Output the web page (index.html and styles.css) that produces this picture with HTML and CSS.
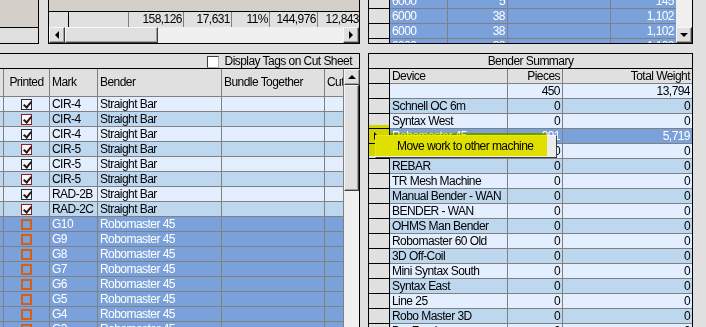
FILE: index.html
```html
<!DOCTYPE html>
<html lang="en">
<head>
  <meta charset="UTF-8" />
  <title>Bender Summary</title>
  <link rel="stylesheet" href="styles.css">
</head>
<body>
  <div class="top">
    <div class="stub">
      <div class="stub-head"></div>
    </div>

    <div class="totals">
      <div class="totals-head"></div>
      <div class="totals-row">
        <span class="rh"></span>
        <span></span>
        <span>158,126</span>
        <span>17,631</span>
        <span>11%</span>
        <span>144,976</span>
        <span>12,843</span>
      </div>
      <div class="hscroll">
        <div class="sbtn"><i class="arr-l"></i></div>
        <div class="thumb-h"></div>
        <div class="track"></div>
        <div class="sbtn"><i class="arr-r"></i></div>
      </div>
    </div>

    <div class="stock">
      <div class="stock-rows">
        <div class="srow"><span class="rh"></span><span>6000</span><span class="num">5</span><span></span><span class="num">145</span></div>
        <div class="srow"><span class="rh"></span><span>6000</span><span class="num">38</span><span></span><span class="num">1,102</span></div>
        <div class="srow"><span class="rh"></span><span>6000</span><span class="num">38</span><span></span><span class="num">1,102</span></div>
        <div class="srow"><span class="rh"></span><span>6000</span><span class="num">38</span><span></span><span class="num">1,102</span></div>
      </div>
      <div class="vscroll">
        <div class="track"></div>
        <div class="sbtn"><i class="arr-d"></i></div>
      </div>
    </div>
  </div>

  <div class="main">
    <!-- cut list -->
    <div class="cuts">
      <div class="bar">
        <i class="box"></i>
        <label>Display Tags on Cut Sheet</label>
      </div>
      <div class="cuts-body">
        <div class="cut-table">
          <div class="crow chead"><span></span><span class="c">Printed</span><span>Mark</span><span>Bender</span><span>Bundle Together</span><span>Cut</span></div>
          <div class="crow"><span></span><span class="c"><i class="chk"></i></span><span>CIR-4</span><span>Straight Bar</span><span></span><span></span></div>
          <div class="crow alt"><span></span><span class="c"><i class="chk red"></i></span><span>CIR-4</span><span>Straight Bar</span><span></span><span></span></div>
          <div class="crow"><span></span><span class="c"><i class="chk"></i></span><span>CIR-4</span><span>Straight Bar</span><span></span><span></span></div>
          <div class="crow alt"><span></span><span class="c"><i class="chk red"></i></span><span>CIR-5</span><span>Straight Bar</span><span></span><span></span></div>
          <div class="crow"><span></span><span class="c"><i class="chk"></i></span><span>CIR-5</span><span>Straight Bar</span><span></span><span></span></div>
          <div class="crow alt"><span></span><span class="c"><i class="chk red"></i></span><span>CIR-5</span><span>Straight Bar</span><span></span><span></span></div>
          <div class="crow"><span></span><span class="c"><i class="chk"></i></span><span>RAD-2B</span><span>Straight Bar</span><span></span><span></span></div>
          <div class="crow alt"><span></span><span class="c"><i class="chk red"></i></span><span>RAD-2C</span><span>Straight Bar</span><span></span><span></span></div>
          <div class="crow sel"><span></span><span class="c"><i class="chk off"></i></span><span>G10</span><span>Robomaster 45</span><span></span><span></span></div>
          <div class="crow sel"><span></span><span class="c"><i class="chk off"></i></span><span>G9</span><span>Robomaster 45</span><span></span><span></span></div>
          <div class="crow sel"><span></span><span class="c"><i class="chk off"></i></span><span>G8</span><span>Robomaster 45</span><span></span><span></span></div>
          <div class="crow sel"><span></span><span class="c"><i class="chk off"></i></span><span>G7</span><span>Robomaster 45</span><span></span><span></span></div>
          <div class="crow sel"><span></span><span class="c"><i class="chk off"></i></span><span>G6</span><span>Robomaster 45</span><span></span><span></span></div>
          <div class="crow sel"><span></span><span class="c"><i class="chk off"></i></span><span>G5</span><span>Robomaster 45</span><span></span><span></span></div>
          <div class="crow sel"><span></span><span class="c"><i class="chk off"></i></span><span>G4</span><span>Robomaster 45</span><span></span><span></span></div>
          <div class="crow sel"><span></span><span class="c"><i class="chk off"></i></span><span>G3</span><span>Robomaster 45</span><span></span><span></span></div>
        </div>
        <div class="vscroll">
          <div class="sbtn"><i class="arr-u"></i></div>
          <div class="thumb-v"></div>
          <div class="track"></div>
        </div>
      </div>
    </div>

    <!-- bender summary -->
    <div class="summary">
      <div class="sum-title">Bender Summary</div>
      <div class="mrow mhead"><span class="rh"></span><span>Device</span><span class="num">Pieces</span><span class="num">Total Weight</span></div>
      <div class="mrow"><span class="rh"></span><span></span><span class="num">450</span><span class="num">13,794</span></div>
      <div class="mrow alt"><span class="rh"></span><span>Schnell OC 6m</span><span class="num">0</span><span class="num">0</span></div>
      <div class="mrow"><span class="rh"></span><span>Syntax West</span><span class="num">0</span><span class="num">0</span></div>
      <div class="mrow sel"><span class="rh cur"><i class="arr-r"></i></span><span>Robomaster 45</span><span class="num">391</span><span class="num">5,719</span></div>
      <div class="mrow"><span class="rh"></span><span>Robomaster 60</span><span class="num">0</span><span class="num">0</span></div>
      <div class="mrow alt"><span class="rh"></span><span>REBAR</span><span class="num">0</span><span class="num">0</span></div>
      <div class="mrow"><span class="rh"></span><span>TR Mesh Machine</span><span class="num">0</span><span class="num">0</span></div>
      <div class="mrow alt"><span class="rh"></span><span>Manual Bender - WAN</span><span class="num">0</span><span class="num">0</span></div>
      <div class="mrow"><span class="rh"></span><span>BENDER - WAN</span><span class="num">0</span><span class="num">0</span></div>
      <div class="mrow alt"><span class="rh"></span><span>OHMS Man Bender</span><span class="num">0</span><span class="num">0</span></div>
      <div class="mrow"><span class="rh"></span><span>Robomaster 60 Old</span><span class="num">0</span><span class="num">0</span></div>
      <div class="mrow alt"><span class="rh"></span><span>3D Off-Coil</span><span class="num">0</span><span class="num">0</span></div>
      <div class="mrow"><span class="rh"></span><span>Mini Syntax South</span><span class="num">0</span><span class="num">0</span></div>
      <div class="mrow alt"><span class="rh"></span><span>Syntax East</span><span class="num">0</span><span class="num">0</span></div>
      <div class="mrow"><span class="rh"></span><span>Line 25</span><span class="num">0</span><span class="num">0</span></div>
      <div class="mrow alt"><span class="rh"></span><span>Robo Master 3D</span><span class="num">0</span><span class="num">0</span></div>
      <div class="mrow"><span class="rh"></span><span>Bar Feeder</span><span class="num">0</span><span class="num">0</span></div>
    </div>
  </div>

  <!-- context menu + marker highlight -->
  <div class="menu">Move work to other machine</div>
  <div class="mark mark-a"></div>
  <div class="mark mark-b"></div>
</body>
</html>
```

FILE: styles.css
```css
* {
  box-sizing: border-box;
}

body {
  margin: 0;
  width: 706px;
  height: 327px;
  overflow: hidden;
  position: relative;
  background: #e0e0e0;
  color: #000;
  font-family: "Liberation Sans", Arial, sans-serif;
  font-size: 12px;
  line-height: 14px;
  letter-spacing: -0.55px;
}

/* top strip */
.top {
  display: flex;
  height: 44px;
}

.stub {
  width: 39px;
  border-right: 1px solid #000;
  border-bottom: 1px solid #000;
}

.stub-head {
  height: 28px;
  background: #d4d0c8;
  border-bottom: 1px solid #000;
}

.totals {
  width: 312px;
  margin-left: 9px;
  border: 1px solid #000;
  border-top: 0;
}

.totals-head {
  height: 12px;
  background: #d4d0c8;
  border-bottom: 1px solid #000;
}

.totals-row {
  display: grid;
  grid-template-columns: 20px 60px 55px 48px 38px 48px 41px;
  height: 15px;
  line-height: 15px;
}

.totals-row span {
  border-right: 1px solid #808080;
  text-align: right;
  padding-right: 1px;
  white-space: nowrap;
  overflow: hidden;
}

.totals-row .rh {
  border-right-color: #000;
}

.totals-row span:last-child {
  border-right: 0;
  padding-right: 0;
}

.hscroll {
  display: flex;
  height: 16px;
  background: #f0f0f0;
}

.track {
  flex: 1;
  background: #f0f0f0;
}

.sbtn,
.thumb-h,
.thumb-v {
  flex: none;
  background: #e0e0e0;
  border: 1px solid;
  border-color: #f6f6f6 #404040 #404040 #f6f6f6;
  box-shadow: inset -1px -1px #a0a0a0;
}

.sbtn {
  width: 16px;
  height: 16px;
  display: flex;
  align-items: center;
  justify-content: center;
}

.thumb-h {
  width: 93px;
}

.thumb-v {
  height: 106px;
}

.arr-l,
.arr-r,
.arr-u,
.arr-d {
  display: block;
  width: 0;
  height: 0;
  border: 4px solid transparent;
}

.arr-l {
  border-left: 0;
  border-right-color: #000;
}

.arr-r {
  border-right: 0;
  border-left-color: #000;
}

.arr-u {
  border-top: 0;
  border-bottom-color: #000;
}

.arr-d {
  border-bottom: 0;
  border-top-color: #000;
}

.stock {
  display: flex;
  width: 325px;
  margin-left: 8px;
  border: 1px solid #000;
  border-top: 0;
  overflow: hidden;
}

.stock-rows {
  width: 307px;
  margin-top: -6px;
}

.srow {
  display: grid;
  grid-template-columns: 21px 58px 60px 103px 65px;
  height: 15px;
}

.srow span {
  background: #7ba1da;
  color: #fff;
  border-right: 1px solid #808080;
  border-bottom: 1px solid #808080;
  padding: 0 2px;
  white-space: nowrap;
}

.srow .rh {
  background: #e0e0e0;
  border-color: #000;
}

.srow span:last-child {
  border-right: 0;
}

.num {
  text-align: right;
}

.vscroll {
  width: 16px;
  display: flex;
  flex-direction: column;
  background: #f0f0f0;
}

/* lower panels */
.main {
  display: flex;
  margin-top: 9px;
}

.cuts {
  width: 360px;
  border-top: 1px solid #000;
  border-right: 1px solid #000;
}

.bar {
  height: 15px;
  border-bottom: 1px solid #000;
  display: flex;
  justify-content: flex-end;
  align-items: flex-end;
  gap: 6px;
  padding-right: 7px;
}

.bar .box {
  display: block;
  width: 12px;
  height: 12px;
  background: #fff;
  border: 1px solid;
  border-color: #404040 #b0b0b0 #b0b0b0 #404040;
}

.cuts-body {
  display: flex;
}

.cut-table {
  width: 343px;
}

.cuts .vscroll {
  border-left: 1px solid #808080;
  height: 274px;
}

.crow {
  display: grid;
  grid-template-columns: 4px 46px 48px 124px 103px 18px;
  height: 15px;
  background: #e3efff;
}

.crow span {
  border-right: 1px solid #808080;
  border-bottom: 1px solid #808080;
  padding: 0 2px;
  white-space: nowrap;
  overflow: hidden;
}

.crow span:first-child {
  padding: 0;
}

.crow span:last-child {
  border-right: 0;
}

.crow.alt {
  background: #bdd7ee;
}

.crow.sel {
  background: #7ba1da;
  color: #fff;
}

.crow.chead {
  height: 28px;
  background: #e0e0e0;
}

.chead span {
  line-height: 27px;
}

.c {
  text-align: center;
}

.chk {
  display: block;
  position: relative;
  width: 11px;
  height: 11px;
  margin: 2px auto 0;
  background: #f4f8fc;
  border: 1px solid #1f2d3d;
}

.chk::after {
  content: "";
  position: absolute;
  left: 3px;
  top: 0;
  width: 3px;
  height: 6px;
  border: solid #2a1a10;
  border-width: 0 2px 2px 0;
  transform: rotate(40deg);
}

.chk.red {
  border-color: #8a1f1f;
}

.chk.off {
  background: transparent;
  border: 2px solid #d0601a;
}

.chk.off::after {
  display: none;
}

.summary {
  width: 325px;
  margin-left: 8px;
  border: 1px solid #000;
  border-bottom: 0;
}

.sum-title {
  height: 15px;
  border-bottom: 1px solid #000;
  text-align: center;
  background: #e0e0e0;
}

.mrow {
  display: grid;
  grid-template-columns: 21px 118px 55px 129px;
  height: 15px;
  background: #e3efff;
}

.mrow span {
  border-right: 1px solid #808080;
  border-bottom: 1px solid #808080;
  padding: 0 2px;
  white-space: nowrap;
  overflow: hidden;
}

.mrow span:last-child {
  border-right: 0;
}

.mrow .rh {
  background: #e0e0e0;
  border-color: #000;
}

.mrow.mhead {
  background: #e0e0e0;
}

.mrow.alt {
  background: #bdd7ee;
}

.mrow.sel {
  background: #7ba1da;
  color: #fff;
}

.rh.cur {
  display: flex;
  align-items: center;
  padding-left: 5px;
}

/* popup */
.menu {
  position: absolute;
  left: 375px;
  top: 135px;
  width: 182px;
  height: 23px;
  padding-left: 21px;
  line-height: 20px;
  background: #ececec;
  border: 1px solid;
  border-color: #f8f8f8 #404040 #404040 #f8f8f8;
}

.mark {
  position: absolute;
  background: #f2f200;
  mix-blend-mode: multiply;
}

.mark-a {
  left: 368px;
  top: 125px;
  width: 22px;
  height: 8px;
}

.mark-b {
  left: 368px;
  top: 133px;
  width: 179px;
  height: 23px;
}
```
